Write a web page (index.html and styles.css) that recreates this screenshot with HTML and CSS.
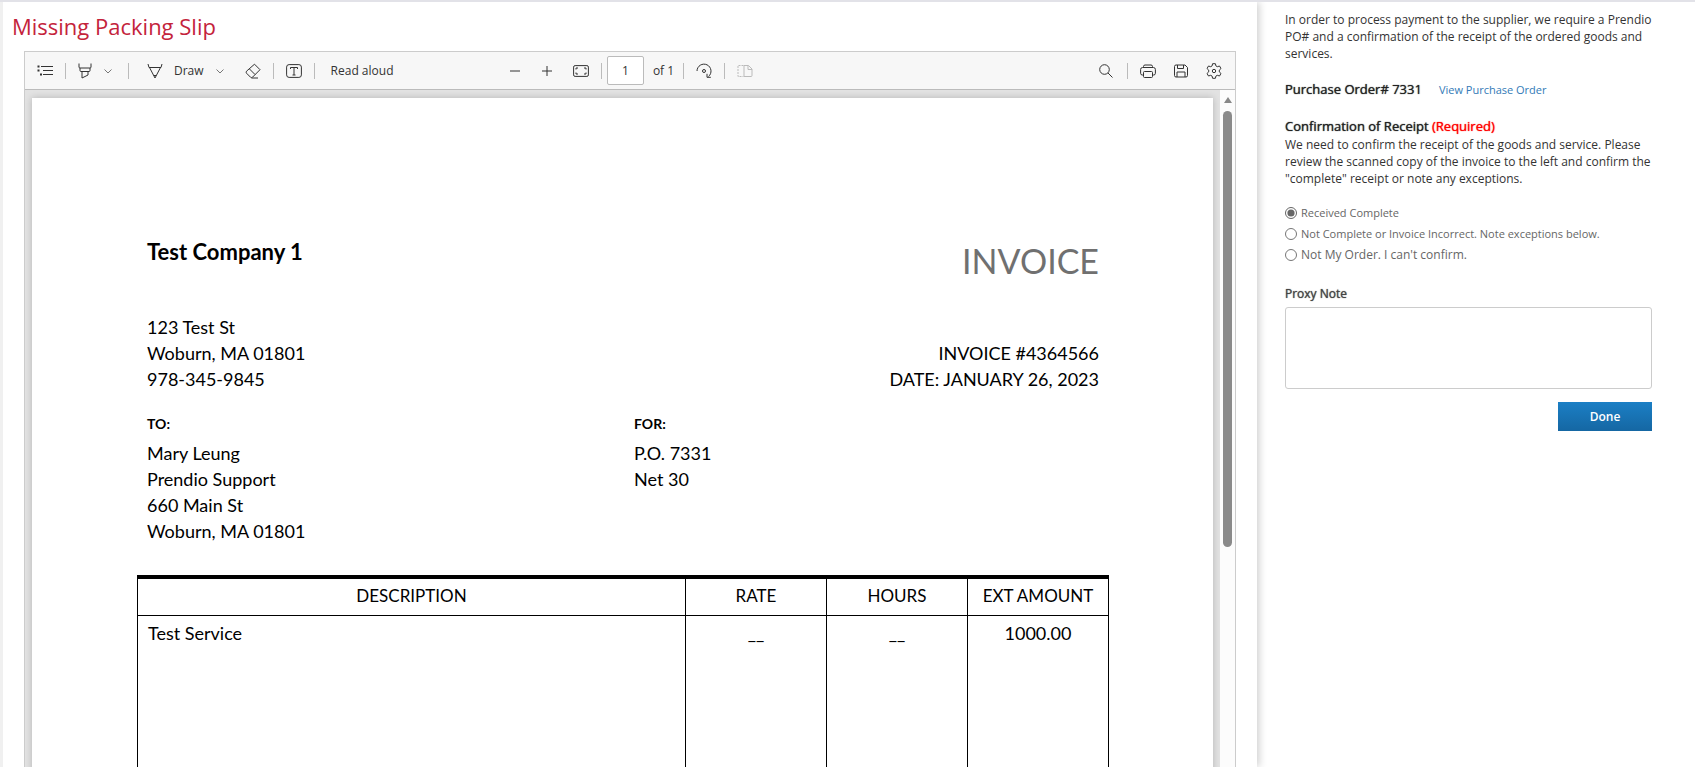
FILE: index.html
```html
<!DOCTYPE html>
<html lang="en">
<head>
  <meta charset="UTF-8">
  <title>Missing Packing Slip</title>
  <link rel="stylesheet" href="styles.css">
</head>
<body>
  <main class="document">
    <h1>Missing Packing Slip</h1>

    <div class="viewer">
      <div class="toolbar">
        <div class="tools">
          <button class="tool" aria-label="Contents">
            <svg class="icon" viewBox="0 0 16 16"><path d="M4 3.500h12M6 7.500h10M6 11.500h10"/><path class="fill" d="M.5 2.500h2v2h-2zM.5 6.500h2v2h-2zM3 10.500h2v2H3z"/></svg>
          </button>
          <span class="sep"></span>
          <button class="tool split" aria-label="Highlight">
            <svg class="icon" viewBox="0 0 16 16"><path d="M2 .5v3.500q0 1 1 1h10q1 0 1-1V.5M3 5v2.500q0 1 1 1h8q1 0 1-1V5M5 8.500v6.500l6-3V8.500"/></svg>
            <svg class="chevron" viewBox="0 0 10 10"><path d="M1.500 3.500L5 7l3.500-3.500"/></svg>
          </button>
          <span class="sep"></span>
          <button class="tool draw">
            <svg class="icon" viewBox="0 0 16 16"><path d="M1 1l1 3.500h12L15 1M2.500 4.500L8 15l5.500-10.500M6.800 12.500h2.400"/></svg>
            Draw
            <svg class="chevron" viewBox="0 0 10 10"><path d="M1.500 3.500L5 7l3.500-3.500"/></svg>
          </button>
          <button class="tool" aria-label="Erase">
            <svg class="icon" viewBox="0 0 16 16"><path d="M9.500 1.200L15 6.700 7.500 14.200q-1 .8-2 0L1.500 10.200q-.8-1 0-2zM4.500 6l5.500 5.500M6.500 15h6.500"/></svg>
          </button>
          <span class="sep"></span>
          <button class="tool" aria-label="Add text">
            <svg class="icon" viewBox="0 0 16 16"><rect x=".6" y="1.600" width="14.800" height="12.800" rx="2.500"/><path d="M4.500 6V4.500h7V6M8 4.500v7.500M6.500 12h3"/></svg>
          </button>
          <span class="sep"></span>
          <button class="tool read">Read aloud</button>
        </div>

        <div class="tools tools-center">
          <button class="tool zoom" aria-label="Zoom out">
            <svg class="small-icon" viewBox="0 0 10 10"><path d="M0 5h10"/></svg>
          </button>
          <button class="tool zoom" aria-label="Zoom in">
            <svg class="small-icon" viewBox="0 0 10 10"><path d="M0 5h10M5 0v10"/></svg>
          </button>
          <button class="tool fit" aria-label="Fit to page">
            <svg class="icon" viewBox="0 0 16 16"><rect x=".6" y="2.600" width="14.800" height="10.800" rx="1.500"/><path d="M3 6.500V5h2M11 5h2v1.500M13 9.500V11h-2M5 11H3V9.500"/></svg>
          </button>
          <span class="sep"></span>
          <input class="page-number" type="text" value="1" aria-label="Page number">
          <span class="page-count">of 1</span>
          <span class="sep"></span>
          <button class="tool" aria-label="Rotate">
            <svg class="icon" viewBox="0 0 16 16"><path d="M1 8a7 7 0 1 1 11.500 5.500M11 10.800v3.500h3.800"/><circle cx="8" cy="8" r="1.500"/></svg>
          </button>
          <span class="sep"></span>
          <button class="tool disabled" aria-label="Page view" disabled>
            <svg class="icon" viewBox="0 0 16 16"><path stroke-dasharray="2 1" d="M6.500 2.500H1v11h5.500"/><path d="M7 2.500h4.500l3.500 3.500v6.500q0 1-1 1H7zM11 2.500v4h4"/></svg>
          </button>
        </div>

        <div class="tools tools-end">
          <button class="tool" aria-label="Search">
            <svg class="icon" viewBox="0 0 16 16"><circle cx="6.500" cy="6.500" r="4.800"/><path d="M10 10l4.500 4.500"/></svg>
          </button>
          <span class="sep"></span>
          <button class="tool" aria-label="Print">
            <svg class="icon" viewBox="0 0 16 16"><path d="M3.500 4.500v-1q0-1.500 1.500-1.500h6q1.500 0 1.500 1.500v1M3.500 12H2.300Q.6 12 .6 10.300V6.500Q.6 4.500 2.600 4.500h10.800q2 0 2 2v3.800q0 1.700-1.700 1.700H12.500"/><rect x="3.500" y="8.500" width="9" height="6" rx="1"/></svg>
          </button>
          <button class="tool" aria-label="Save">
            <svg class="icon" viewBox="0 0 16 16"><path d="M3 2h9l2.500 2.500V12.500q0 1.500-1.500 1.500H3q-1.500 0-1.500-1.500v-9Q1.500 2 3 2zM4.500 2v3.500h6V2M4 14V9h8v5"/></svg>
          </button>
          <button class="tool" aria-label="Settings">
            <svg class="icon" viewBox="0 0 16 16"><path d="M6.600.7h2.800l.5 2.200 1.400.8 2.200-.7 1.500 2.500L13.300 7.100v1.800L15 10.500 13.500 13l-2.200-.7-1.400.8-.5 2.200H6.600l-.5-2.200-1.400-.8L2.500 13 1 10.500l1.700-1.600V7.100L1 5.500 2.500 3l2.200.7 1.400-.8z" stroke-linejoin="round"/><circle cx="8" cy="8" r="1.700"/></svg>
          </button>
        </div>
      </div>

      <div class="canvas">
        <article class="page">
          <header class="invoice-head">
            <h2>Test Company 1</h2>
            <div class="invoice-title">INVOICE</div>
          </header>
          <div class="invoice-info">
            <address>
              123 Test St<br>
              Woburn, MA 01801<br>
              978-345-9845
            </address>
            <div class="invoice-ref">
              INVOICE #4364566<br>
              DATE: JANUARY 26, 2023
            </div>
          </div>
          <div class="parties">
            <div>
              <h3>TO:</h3>
              Mary Leung<br>
              Prendio Support<br>
              660 Main St<br>
              Woburn, MA 01801
            </div>
            <div>
              <h3>FOR:</h3>
              P.O. 7331<br>
              Net 30
            </div>
          </div>
          <table>
            <thead>
              <tr>
                <th class="col-desc">DESCRIPTION</th>
                <th>RATE</th>
                <th>HOURS</th>
                <th>EXT AMOUNT</th>
              </tr>
            </thead>
            <tbody>
              <tr>
                <td class="col-desc">Test Service</td>
                <td>__</td>
                <td>__</td>
                <td>1000.00</td>
              </tr>
            </tbody>
          </table>
        </article>
        <div class="scrollbar">
          <svg class="arrow" viewBox="0 0 8 6"><path d="M4 0l4 6H0z"/></svg>
          <div class="thumb"></div>
        </div>
      </div>
    </div>
  </main>

  <aside class="sidebar">
    <p>In order to process payment to the supplier, we require a Prendio PO# and a confirmation of the receipt of the ordered goods and services.</p>

    <div class="order">
      <strong>Purchase Order# 7331</strong>
      <a href="#">View Purchase Order</a>
    </div>

    <h4>Confirmation of Receipt <span class="required">(Required)</span></h4>
    <p>We need to confirm the receipt of the goods and service. Please review the scanned copy of the invoice to the left and confirm the "complete" receipt or note any exceptions.</p>

    <form>
      <div class="options">
        <label><input type="radio" name="receipt" checked> Received Complete</label>
        <label><input type="radio" name="receipt"> Not Complete or Invoice Incorrect. Note exceptions below.</label>
        <label class="not-mine"><input type="radio" name="receipt"> Not My Order. I can't confirm.</label>
      </div>
      <label class="note-label" for="note">Proxy Note</label>
      <textarea id="note"></textarea>
      <button class="done" type="button">Done</button>
    </form>
  </aside>
</body>
</html>
```
FILE: styles.css
```css
* {
  box-sizing: border-box;
  margin: 0;
  padding: 0;
}

body {
  display: grid;
  grid-template-columns: 1fr 438px;
  height: 100vh;
  overflow: hidden;
  border-top: 2px solid #e2e2e8;
  background: #fff;
  color: #333;
  font-family: "Open Sans", sans-serif;
  font-size: 12px;
  line-height: 17px;
}

button,
input,
textarea {
  font: inherit;
  color: inherit;
}

/* left side: title and pdf viewer */
.document {
  display: flex;
  flex-direction: column;
  min-height: 0;
  padding: 9px 21px 0;
  border-left: 3px solid #f0f0f0;
  box-shadow: 2px 0 8px rgba(0, 0, 0, 0.2);
}

h1 {
  margin: 0 0 10px -12px;
  color: #c4233b;
  font-size: 22px;
  font-weight: 400;
  line-height: 30px;
}

.viewer {
  display: flex;
  flex: 1;
  flex-direction: column;
  min-height: 0;
  border: 1px solid #ccc;
  border-bottom: 0;
}

.toolbar {
  display: grid;
  grid-template-columns: 1fr auto 1fr;
  height: 38px;
  flex: none;
  border-bottom: 1px solid #bbb;
  background: #f7f7f7;
}

.tools {
  display: flex;
  align-items: center;
}

.tools-center {
  padding-left: 4px;
}

.tools-end {
  justify-content: flex-end;
  padding-right: 4px;
}

.tool {
  display: flex;
  align-items: center;
  gap: 10px;
  height: 28px;
  padding: 0 12px;
  border: 0;
  background: none;
  cursor: pointer;
}

.split {
  padding: 0 15px 0 11px;
}

.draw {
  padding: 0 8px 0 18px;
  gap: 11px;
}

.read {
  padding: 0 16px;
}

.zoom {
  padding: 0 11px;
}

.fit {
  padding-left: 10px;
}

.tools-end .tool {
  padding: 0 9px 0 8px;
}

.tools-end .tool:first-child {
  padding-right: 13px;
}

.tools-end .sep + .tool {
  padding-left: 12px;
}

.icon {
  width: 16px;
  height: 16px;
}

.small-icon,
.chevron {
  width: 10px;
  height: 10px;
}

.icon,
.small-icon,
.chevron {
  fill: none;
  stroke: #333;
}

.chevron {
  stroke: #777;
}

.fill {
  fill: #333;
  stroke: none;
}

.disabled .icon {
  stroke: #bbb;
}

.sep {
  width: 1px;
  height: 16px;
  background: #bbb;
}

.page-number {
  width: 37px;
  height: 29px;
  margin: 0 9px 0 5px;
  border: 1px solid #bbb;
  border-radius: 2px;
  background: #fff;
  text-align: center;
}

.page-count {
  margin-right: 9px;
}

.canvas {
  display: flex;
  flex: 1;
  min-height: 0;
  overflow: hidden;
  padding-left: 7px;
  background: #e2e2e2;
}

.page {
  flex: 1;
  height: 1500px;
  margin: 8px 7px 0 0;
  padding: 140px 104px 0 105px;
  background: #fff;
  box-shadow: 0 0 7px rgba(0, 0, 0, 0.2);
  color: #000;
  font-family: Lato, sans-serif;
  font-size: 18px;
  line-height: 26px;
}

.scrollbar {
  display: flex;
  flex-direction: column;
  align-items: center;
  width: 15px;
  padding-top: 7px;
  background: #fcfcfc;
}

.arrow {
  width: 8px;
  height: 6px;
  margin-bottom: 8px;
  fill: #888;
}

.thumb {
  width: 9px;
  height: 65%;
  border-radius: 5px;
  background: #8a8a8a;
}

/* invoice */
.invoice-head,
.invoice-info {
  display: flex;
  justify-content: space-between;
  padding: 0 10px;
}

h2 {
  font-size: 22px;
  line-height: 28px;
}

.invoice-title {
  color: #707070;
  font-size: 34px;
  line-height: 46px;
}

.invoice-info {
  align-items: flex-end;
  margin-top: 30px;
}

address {
  font-style: normal;
}

.invoice-ref {
  text-align: right;
}

.parties {
  display: grid;
  grid-template-columns: 1fr 1fr;
  gap: 22px;
  margin-top: 22px;
  padding: 0 10px;
}

h3 {
  margin-bottom: 6px;
  font-size: 14px;
  line-height: 20px;
}

table {
  width: 100%;
  height: 500px;
  margin-top: 31px;
  border-collapse: collapse;
  table-layout: fixed;
}

th,
td {
  width: 141px;
  padding: 4px 10px;
  border: 1px solid #000;
  font-weight: 400;
  text-align: center;
  vertical-align: top;
  white-space: nowrap;
}

th {
  height: 38px;
  border-top: 4px solid #000;
  font-size: 17px;
}

.col-desc {
  width: auto;
}

td.col-desc {
  text-align: left;
}

/* right side: receipt form */
.sidebar {
  padding: 9px 43px 0 28px;
}

.order {
  display: flex;
  align-items: center;
  gap: 17px;
  margin: 18px 0 19px;
}

.order strong,
h4 {
  color: #222;
  font-size: 13px;
  font-weight: 400;
  line-height: 18px;
  text-shadow: 0 0 1px currentColor;
}

h4 {
  margin-bottom: 1px;
}

a {
  color: #337ab7;
  font-size: 11px;
  text-decoration: none;
}

h4 .required {
  color: #f00;
}

.options {
  display: flex;
  flex-direction: column;
  gap: 4px;
  margin: 17px 0 22px;
  color: #666;
  font-size: 11px;
}

.options label {
  display: flex;
  align-items: center;
  gap: 4px;
}

.options input {
  width: 12px;
  height: 12px;
  accent-color: #666;
}

.options .not-mine {
  font-size: 12px;
}

.note-label {
  display: block;
  margin-bottom: 5px;
  color: #444;
  text-shadow: 0 0 1px currentColor;
}

textarea {
  display: block;
  width: 100%;
  height: 82px;
  border: 1px solid #ccc;
  border-radius: 3px;
  resize: none;
}

.done {
  display: block;
  width: 94px;
  height: 29px;
  margin: 13px 0 0 auto;
  border: 0;
  background: linear-gradient(#1b7fc5, #1567a3);
  color: #fff;
  font-weight: 600;
  cursor: pointer;
}
```
